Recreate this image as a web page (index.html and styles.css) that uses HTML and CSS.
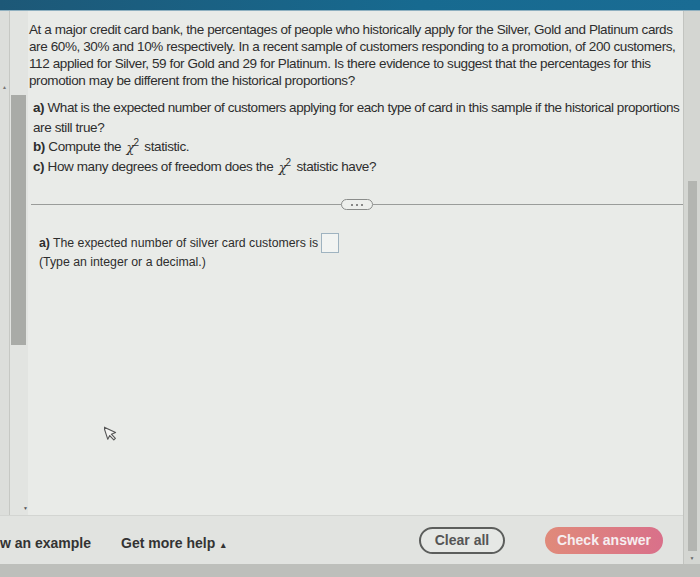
FILE: index.html
```html
<!DOCTYPE html>
<html>
<head>
<meta charset="utf-8">
<link rel="stylesheet" href="styles.css">
</head>
<body>
<div class="topbar"></div>
<div class="frame">
  <div class="page">
    <div class="main">
      <div class="rail-left">
        <span class="arrow-up">▲</span>
      </div>
      <div class="track-left">
        <div class="thumb-left"></div>
        <span class="arrow-down">▼</span>
      </div>
      <div class="content">
        <p class="intro">At a major credit card bank, the percentages of people who historically apply for the Silver, Gold and Platinum cards<br>are 60%, 30% and 10% respectively. In a recent sample of customers responding to a promotion, of 200 customers,<br>112 applied for Silver, 59 for Gold and 29 for Platinum. Is there evidence to suggest that the percentages for this<br>promotion may be different from the historical proportions?</p>
        <div class="parts">
          <p class="part"><b>a)</b> <span class="tight">What is the expected number of customers applying for each type of card in this sample if the historical proportions</span><br>are still true?</p>
          <p class="part"><b>b)</b> Compute the <span class="chi">χ<sup>2</sup></span> statistic.</p>
          <p class="part"><b>c)</b> How many degrees of freedom does the <span class="chi">χ<sup>2</sup></span> statistic have?</p>
        </div>
        <div class="divider">
          <span class="line"></span>
          <span class="more"><i></i><i></i><i></i></span>
          <span class="line"></span>
        </div>
        <div class="answer">
          <p class="ans-line"><b>a)</b> The expected number of silver card customers is <span class="inbox"></span></p>
          <p class="hint">(Type an integer or a decimal.)</p>
        </div>
        <svg class="cursor" width="14" height="18" viewBox="0 0 14 18">
          <path d="M2 1 L2 14 L5 11 L7.5 16.5 L9.5 15.5 L7 10.2 L11.5 10 Z" fill="#f4f4f2" stroke="#555" stroke-width="1.1" stroke-linejoin="round" transform="rotate(-18 7 9)"/>
        </svg>
      </div>
    </div>
    <div class="footer">
      <span class="link">w an example</span>
      <span class="link help">Get more help <span class="caret">▴</span></span>
      <span class="spacer"></span>
      <span class="btn clear">Clear all</span>
      <span class="btn check">Check answer</span>
    </div>
  </div>
  <div class="rail-right">
    <div class="thumb-right"></div>
    <span class="arrow-down-r">▼</span>
  </div>
</div>
<div class="bottom-edge"></div>
</body>
</html>
```
FILE: styles.css
```css
html, body {
  margin: 0;
  padding: 0;
}
body {
  width: 700px;
  height: 577px;
  overflow: hidden;
  background: #e4e6e3;
  font-family: "Liberation Sans", Arial, sans-serif;
  color: #2e2e2e;
}
.topbar {
  height: 10px;
  background: linear-gradient(90deg, #1d5877, #176a90 60%, #1a6c94);
  border-bottom: 1px solid #8fb0c0;
}
.frame {
  display: flex;
  height: 553px;
}
.page {
  flex: 1;
  display: flex;
  flex-direction: column;
  min-width: 0;
}
.main {
  display: flex;
  height: 504px;
  background: #e9ebe8;
}
.rail-left {
  flex: 0 0 9px;
  background: #dcdedb;
  border-right: 1px solid #c6c8c4;
  display: flex;
  flex-direction: column;
  align-items: center;
}
.arrow-up {
  font-size: 5px;
  color: #777;
  margin-top: 73px;
}
.track-left {
  flex: 0 0 18px;
  display: flex;
  flex-direction: column;
  background: #e2e4e1;
}
.thumb-left {
  margin-top: 84px;
  margin-left: 1px;
  width: 15px;
  height: 250px;
  background: #a9aba7;
}
.arrow-down {
  margin-top: auto;
  margin-bottom: 4px;
  align-self: flex-end;
  font-size: 5px;
  color: #555;
}
.content {
  flex: 1;
  min-width: 0;
  overflow: hidden;
  position: relative;
  padding: 10px 0 0 1px;
  font-size: 13.5px;
  letter-spacing: -0.4px;
  white-space: nowrap;
}
.intro {
  margin: 0;
  line-height: 17px;
}
.parts {
  margin-top: 9px;
  padding-left: 4px;
}
.part {
  margin: 0;
  line-height: 19.5px;
}
.tight {
  letter-spacing: -0.46px;
}
.part b, .answer b {
  font-weight: bold;
}
.chi {
  font-style: italic;
  font-family: "DejaVu Serif", serif;
  font-size: 13px;
  margin: 0 2px;
  letter-spacing: 0;
  line-height: 0;
  vertical-align: -1px;
}
.chi sup {
  font-style: normal;
  font-family: "Liberation Sans", sans-serif;
  font-size: 10px;
  line-height: 0;
  vertical-align: 6px;
  margin-left: -1px;
}
.divider {
  display: flex;
  align-items: center;
  margin-top: 23px;
  margin-left: 2px;
}
.line {
  flex: 1;
  height: 1px;
  background: #9a9c9a;
}
.more {
  display: flex;
  gap: 3px;
  align-items: center;
  justify-content: center;
  width: 30px;
  height: 9px;
  border: 1px solid #8a8c8a;
  border-radius: 6px;
  background: #edefec;
}
.more i {
  width: 2px;
  height: 2px;
  background: #666;
  border-radius: 1px;
}
.answer {
  margin-top: 23px;
  padding-left: 10px;
  font-size: 12.3px;
  letter-spacing: 0;
}
.ans-line {
  margin: 0;
  line-height: 20px;
  display: flex;
  align-items: center;
  gap: 3px;
}
.inbox {
  display: inline-block;
  width: 16px;
  height: 18px;
  border: 1px solid #9fb3c0;
  background: #f2f4f2;
}
.hint {
  margin: 0;
  line-height: 18px;
}
.cursor {
  position: absolute;
  left: 76px;
  top: 413px;
}
.footer {
  flex: 1;
  display: flex;
  align-items: center;
  background: #e1e3e0;
  border-top: 1px solid #d3d5d2;
  padding-right: 20px;
  font-size: 14px;
}
.link {
  font-weight: bold;
  color: #333;
  margin-top: 5px;
}
.help {
  margin-left: 30px;
}
.caret {
  font-size: 9px;
  margin-left: 2px;
}
.spacer {
  flex: 1;
}
.btn {
  display: inline-flex;
  align-items: center;
  justify-content: center;
  height: 27px;
  border-radius: 14px;
  font-weight: bold;
  font-size: 14px;
  box-sizing: border-box;
}
.clear {
  width: 86px;
  border: 2px solid #5c5e5c;
  color: #555;
  background: #e6e8e5;
}
.check {
  width: 118px;
  margin-left: 40px;
  color: #f6eef0;
  background: linear-gradient(90deg, #e08a7a, #d9708a);
}
.rail-right {
  flex: 0 0 16px;
  background: #d4d6d2;
  border-left: 1px solid #c2c4c0;
  display: flex;
  flex-direction: column;
  align-items: center;
}
.thumb-right {
  margin-top: 170px;
  width: 9px;
  height: 370px;
  background: #b3b5b1;
}
.arrow-down-r {
  margin-top: auto;
  margin-bottom: 3px;
  font-size: 5px;
  color: #666;
}
.bottom-edge {
  height: 14px;
  background: #bdbfbb;
}
```
